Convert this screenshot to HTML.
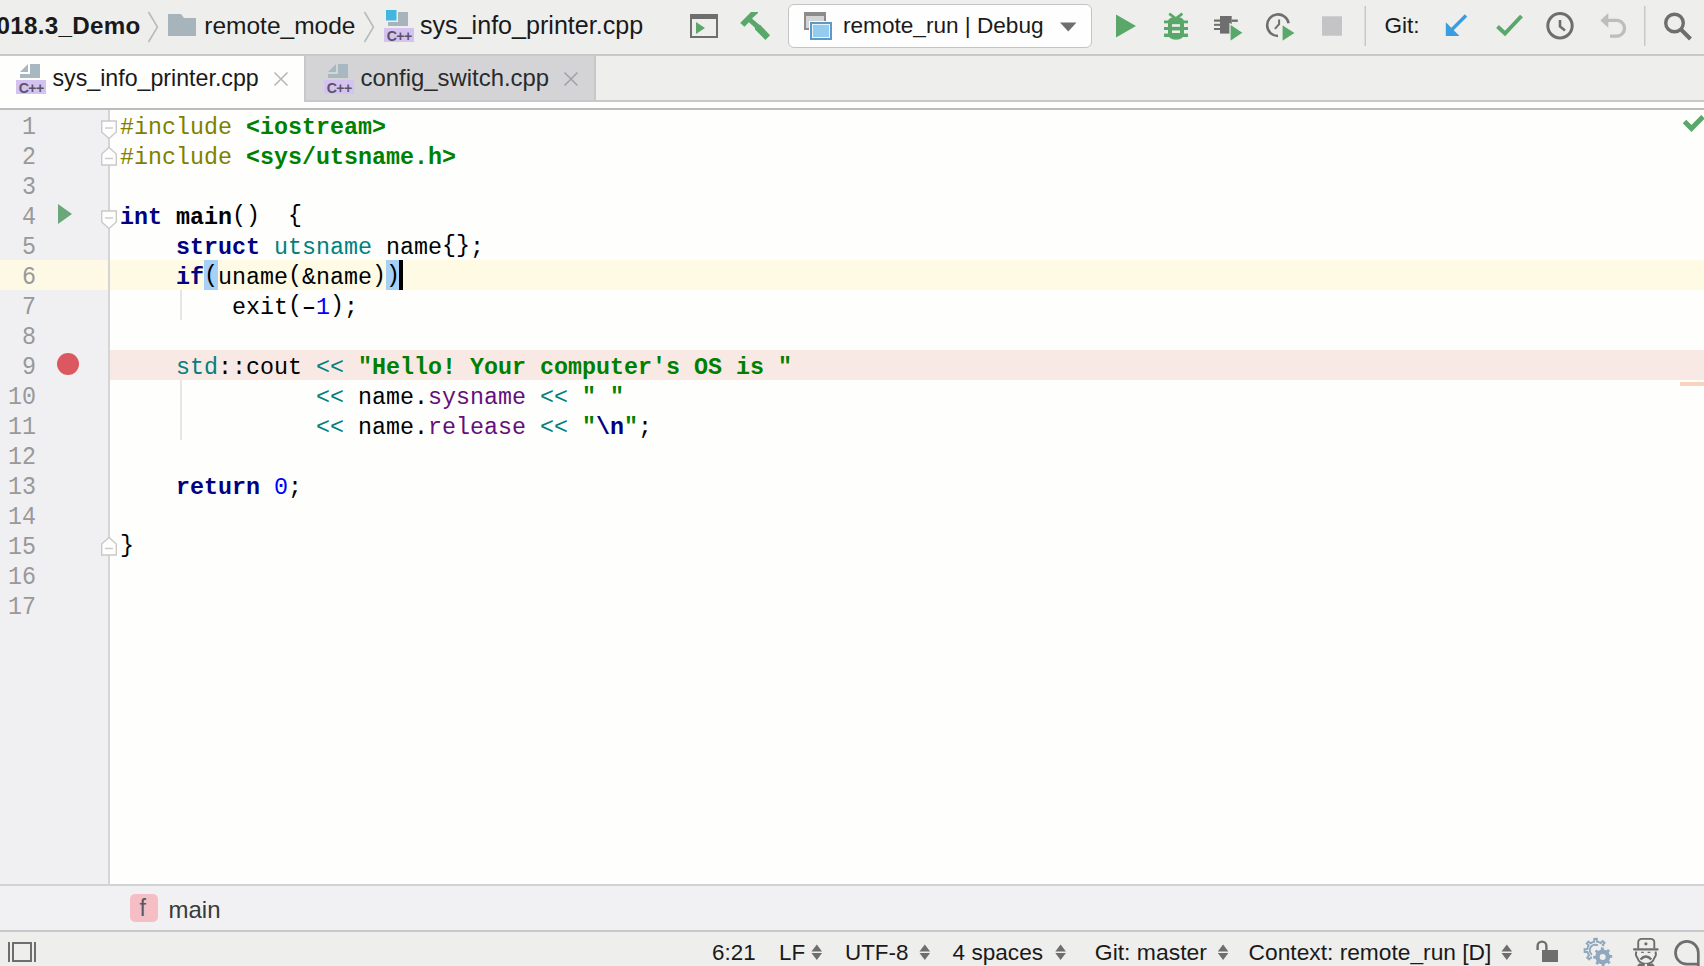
<!DOCTYPE html>
<html><head><meta charset="utf-8"><style>
*{margin:0;padding:0;box-sizing:border-box}
html,body{width:1704px;height:966px;overflow:hidden;background:#eeeeec;font-family:"Liberation Sans",sans-serif;position:relative}
.a{position:absolute}
.t{position:absolute;white-space:pre;line-height:1}
svg{position:absolute;overflow:visible}
.code{position:absolute;left:120px;margin-top:3px;transform:scaleY(1.06);transform-origin:0 21.2px;font-family:"Liberation Mono",monospace;font-size:23.33px;line-height:30px;white-space:pre;color:#000}
.ln{position:absolute;left:0;margin-top:3px;transform:scaleY(1.12);transform-origin:50% 21.2px;width:36px;text-align:right;font-family:"Liberation Mono",monospace;font-size:23.33px;line-height:30px;color:#999}
.kw{color:#000080;font-weight:bold}
.pp{color:#808000}
.inc{color:#008000;font-weight:bold}
.cls{color:#008080}
.op{color:#008080}
.fld{color:#660e7a}
.num{color:#0000ff}
.str{color:#008000;font-weight:bold}
.esc{color:#000080;font-weight:bold}
.br{position:relative;top:-2px}
.hy{display:inline-block;transform:scaleX(1.6)}
</style></head><body>
<div class="a" style="left:0px;top:0px;width:1704px;height:54px;background:#eeeeec;"></div>
<div class="a" style="left:0px;top:54px;width:1704px;height:2px;background:#c8c8ca;"></div>
<div class="a" style="left:0px;top:56px;width:1704px;height:44px;background:#eeeeec;"></div>
<div class="a" style="left:0px;top:56px;width:304px;height:52px;background:#fefefc;"></div>
<div class="a" style="left:304px;top:56px;width:2px;height:44px;background:#c8c8ca;"></div>
<div class="a" style="left:306px;top:56px;width:288px;height:44px;background:#d4d4d7;"></div>
<div class="a" style="left:594px;top:56px;width:2px;height:44px;background:#c8c8ca;"></div>
<div class="a" style="left:304px;top:100px;width:1400px;height:2px;background:#c8c8ca;"></div>
<div class="a" style="left:304px;top:102px;width:1400px;height:6px;background:#fefefc;"></div>
<div class="a" style="left:0px;top:108px;width:1704px;height:2px;background:#bcbcbe;"></div>
<div class="a" style="left:0px;top:110px;width:108px;height:774px;background:#f0f0f3;"></div>
<div class="a" style="left:108px;top:110px;width:2px;height:774px;background:#d5d5d8;"></div>
<div class="a" style="left:110px;top:110px;width:1594px;height:774px;background:#fefefc;"></div>
<div class="a" style="left:0px;top:884px;width:1704px;height:2px;background:#d2d2d5;"></div>
<div class="a" style="left:0px;top:886px;width:1704px;height:44px;background:#f1f1f3;"></div>
<div class="a" style="left:0px;top:930px;width:1704px;height:2px;background:#c8c8ca;"></div>
<div class="a" style="left:0px;top:932px;width:1704px;height:34px;background:#eeeeec;"></div>
<div class="a" style="left:0px;top:260px;width:108px;height:30px;background:#fef9e4;"></div>
<div class="a" style="left:110px;top:260px;width:1594px;height:30px;background:#fefae4;"></div>
<div class="a" style="left:110px;top:350px;width:1594px;height:30px;background:#f9e9e5;"></div>
<div class="a" style="left:204px;top:260px;width:14px;height:30px;background:#a6d0f5;"></div>
<div class="a" style="left:386px;top:260px;width:13px;height:30px;background:#a6d0f5;"></div>
<div class="a" style="left:180px;top:290px;width:2px;height:30px;background:#e6e6e6;"></div>
<div class="a" style="left:180px;top:380px;width:2px;height:60px;background:#e6e6e6;"></div>
<div class="a" style="left:57px;top:353px;width:22px;height:22px;background:#db5860;border-radius:50%"></div>
<div class="a" style="left:1680px;top:382px;width:24px;height:4px;background:#f9d3be;"></div>
<svg style="left:0;top:0" width="1704" height="966"><path d="M101.7,121 H116.3 V132 L109,138.5 L101.7,132 Z" fill="#fefefc" stroke="#c9c9cc" stroke-width="1.4"/><path d="M105,128 H113" stroke="#c9c9cc" stroke-width="1.4"/><path d="M101.7,165 H116.3 V154 L109,147.5 L101.7,154 Z" fill="#fefefc" stroke="#c9c9cc" stroke-width="1.4"/><path d="M105,158.5 H113" stroke="#c9c9cc" stroke-width="1.4"/><path d="M101.7,211 H116.3 V222 L109,228.5 L101.7,222 Z" fill="#fefefc" stroke="#c9c9cc" stroke-width="1.4"/><path d="M105,218 H113" stroke="#c9c9cc" stroke-width="1.4"/><path d="M101.7,555 H116.3 V544 L109,537.5 L101.7,544 Z" fill="#fefefc" stroke="#c9c9cc" stroke-width="1.4"/><path d="M105,548.5 H113" stroke="#c9c9cc" stroke-width="1.4"/><polygon points="58,204 72,214 58,224" fill="#6aa87b"/><polyline points="1684.5,121.4 1691.5,128.4 1703,116.8" fill="none" stroke="#59a869" stroke-width="5"/></svg>
<div class="ln" style="top:110px">1</div>
<div class="code" style="top:110px"><span class="pp">#include </span><span class="inc">&lt;iostream&gt;</span></div>
<div class="ln" style="top:140px">2</div>
<div class="code" style="top:140px"><span class="pp">#include </span><span class="inc">&lt;sys/utsname.h&gt;</span></div>
<div class="ln" style="top:170px">3</div>
<div class="ln" style="top:200px">4</div>
<div class="code" style="top:200px"><span class="kw">int</span> <b>main</b><span class="br">(</span><span class="br">)</span>  <span class="br">{</span></div>
<div class="ln" style="top:230px">5</div>
<div class="code" style="top:230px">    <span class="kw">struct</span> <span class="cls">utsname</span> name<span class="br">{</span><span class="br">}</span>;</div>
<div class="ln" style="top:260px">6</div>
<div class="code" style="top:260px">    <span class="kw">if</span><span class="br">(</span>uname<span class="br">(</span>&amp;name<span class="br">)</span><span class="br">)</span></div>
<div class="ln" style="top:290px">7</div>
<div class="code" style="top:290px">        exit<span class="br">(</span><span class="hy">-</span><span class="num">1</span><span class="br">)</span>;</div>
<div class="ln" style="top:320px">8</div>
<div class="ln" style="top:350px">9</div>
<div class="code" style="top:350px">    <span class="op">std</span>::cout <span class="op">&lt;&lt;</span> <span class="str">"Hello! Your computer's OS is "</span></div>
<div class="ln" style="top:380px">10</div>
<div class="code" style="top:380px">              <span class="op">&lt;&lt;</span> name.<span class="fld">sysname</span> <span class="op">&lt;&lt;</span> <span class="str">" "</span></div>
<div class="ln" style="top:410px">11</div>
<div class="code" style="top:410px">              <span class="op">&lt;&lt;</span> name.<span class="fld">release</span> <span class="op">&lt;&lt;</span> <span class="str">"<span class="esc">\n</span>"</span>;</div>
<div class="ln" style="top:440px">12</div>
<div class="ln" style="top:470px">13</div>
<div class="code" style="top:470px">    <span class="kw">return</span> <span class="num">0</span>;</div>
<div class="ln" style="top:500px">14</div>
<div class="ln" style="top:530px">15</div>
<div class="code" style="top:530px"><span class="br">}</span></div>
<div class="ln" style="top:560px">16</div>
<div class="ln" style="top:590px">17</div>
<div class="a" style="left:399px;top:260px;width:4px;height:30px;background:#000;"></div>
<div class="t" style="left:-3.50px;top:14.11px;font-size:24.20px;color:#1a1a1a;font-weight:bold;letter-spacing:0.28px">018.3_Demo</div>
<svg style="left:0;top:0" width="700" height="54"><polyline points="148.5,12 157.5,27 148.5,42" fill="none" stroke="#b5b9bd" stroke-width="1.5"/><polyline points="364.5,12 373.5,27 364.5,42" fill="none" stroke="#b5b9bd" stroke-width="1.5"/><path d="M168,14 H181 L184,18 H196 V36 H168 Z" fill="#a8b4bc"/><rect x="388" y="12" width="20" height="14" fill="#a8b4bc"/><rect x="385" y="9" width="13" height="13" fill="#eeeeec"/><rect x="386" y="10" width="10.5" height="10.5" fill="#40b6e0"/><rect x="384" y="28" width="30" height="14" fill="#d4c2f0"/></svg>
<div class="t" style="left:386.70px;top:28.58px;font-size:14.20px;color:#5c5466;font-weight:bold;letter-spacing:-0.6px">C++</div>
<div class="t" style="left:204.30px;top:13.76px;font-size:24.50px;color:#1a1a1a;font-weight:normal;">remote_mode</div>
<div class="t" style="left:420.00px;top:13.25px;font-size:25.10px;color:#1a1a1a;font-weight:normal;">sys_info_printer.cpp</div>
<svg style="left:0;top:0" width="1704" height="54"><rect x="691" y="15" width="26" height="22" fill="none" stroke="#6e6e6e" stroke-width="2"/><rect x="690" y="14" width="28" height="5" fill="#6e6e6e"/><polygon points="696,22 705,28 696,34" fill="#59a869"/><polygon points="751,12 758,12 758,13 752,18.4 759,24.6 760.3,25 770,35.2 765.4,39.9 755,29.6 754.8,27.4 748.8,22.2 744.5,26.8 740.2,23.1" fill="#59a869"/></svg>
<div class="a" style="left:788px;top:4px;width:304px;height:43.8px;background:#fefefe;border:1px solid #c4c4c4;border-radius:6px"></div>
<svg style="left:0;top:0" width="1704" height="54"><rect x="805" y="13" width="20" height="16" fill="#d4d4d4" stroke="#8c8c8c" stroke-width="2"/><rect x="804" y="12" width="22" height="4" fill="#8c8c8c"/><rect x="809" y="21" width="24" height="20" fill="#fefefe"/><rect x="811" y="23" width="20" height="16" fill="#94cbee" stroke="#5a9acb" stroke-width="2"/><rect x="812.5" y="24.5" width="17" height="13" fill="none" stroke="#e8f4fc" stroke-width="1"/><polygon points="1060,22.5 1076.5,22.5 1068.25,31.5" fill="#6e6e6e"/></svg>
<div class="t" style="left:843.00px;top:15.27px;font-size:22.60px;color:#1a1a1a;font-weight:normal;">remote_run | Debug</div>
<svg style="left:0;top:0" width="1704" height="54"><polygon points="1116,14.6 1136,26.1 1116,37.6" fill="#59a869"/><path d="M1169.2,13.6 L1175.8,18.6 L1182.4,13.6" fill="none" stroke="#59a869" stroke-width="2.6"/><path d="M1168,22 Q1168,17 1176,17 Q1184,17 1184,22 V33 Q1184,39.7 1176,39.7 Q1168,39.7 1168,33 Z" fill="#59a869"/><rect x="1164" y="20.5" width="24" height="2.8" fill="#59a869"/><rect x="1164" y="27" width="24" height="3" fill="#59a869"/><rect x="1164" y="33.6" width="24" height="3.4" fill="#59a869"/><rect x="1172" y="24.2" width="8" height="2.6" fill="#eeeeec"/><rect x="1172" y="30.4" width="8" height="2.6" fill="#eeeeec"/><rect x="1220" y="16" width="11.7" height="17.6" fill="#6e6e6e"/><rect x="1214" y="19.5" width="6" height="2.2" fill="#6e6e6e"/><rect x="1214" y="23.8" width="6" height="2" fill="#6e6e6e"/><rect x="1214" y="28" width="6" height="2" fill="#6e6e6e"/><rect x="1231.7" y="19.5" width="6.1" height="2.4" fill="#6e6e6e"/><polygon points="1230,23.8 1243.4,32.8 1230,41.8" fill="#59a869" stroke="#eeeeec" stroke-width="1.2"/><path d="M1288.6,23.3 A10.8,10.8 0 1 0 1278,36" fill="none" stroke="#6e6e6e" stroke-width="2.6"/><path d="M1279.1,19.6 V24.2 L1274.9,28.9" fill="none" stroke="#6e6e6e" stroke-width="2"/><polygon points="1282,24.2 1295.5,33 1282,41.8" fill="#59a869" stroke="#eeeeec" stroke-width="1.2"/><rect x="1322" y="16.3" width="20" height="19.4" fill="#c4c4c6"/><rect x="1364.5" y="6" width="1.5" height="40" fill="#c8c8c8"/><rect x="1644" y="6" width="1.5" height="40" fill="#c8c8c8"/><path d="M1466,15.5 L1452,29.5" stroke="#3a9de0" stroke-width="3.4"/><polygon points="1445.8,22.2 1445.8,36 1459.5,36" fill="#3a9de0"/><polyline points="1497.5,26.5 1505,33.5 1521.5,16" fill="none" stroke="#59a869" stroke-width="4"/><circle cx="1560" cy="25.7" r="12.2" fill="none" stroke="#6e6e6e" stroke-width="3"/><path d="M1560,20 V26.5 L1565,30.5" fill="none" stroke="#6e6e6e" stroke-width="2.6"/><path d="M1606,20.4 H1617.5 A7.9,7.9 0 0 1 1617.5,36.1 H1610" fill="none" stroke="#bdbdbd" stroke-width="3.3"/><polygon points="1600.3,20.4 1608.3,13.1 1608.3,27.7" fill="#bdbdbd"/><circle cx="1674.5" cy="23" r="8.8" fill="none" stroke="#6e6e6e" stroke-width="3.4"/><path d="M1681,29.5 L1690.5,39" stroke="#6e6e6e" stroke-width="4"/></svg>
<div class="t" style="left:1384.50px;top:15.47px;font-size:22.60px;color:#1a1a1a;font-weight:normal;">Git:</div>
<svg style="left:0;top:0" width="700" height="110"><polygon points="20,72 28,64 28,72" fill="#a8b8c0"/><rect x="30" y="64" width="10" height="14" fill="#a8b8c0"/><rect x="20" y="74" width="20" height="4" fill="#a8b8c0"/><rect x="16" y="80" width="30" height="14" fill="#d4c2f0"/></svg><div class="t" style="left:18.70px;top:80.58px;font-size:14.20px;color:#5c5466;font-weight:bold;letter-spacing:-0.6px">C++</div>
<svg style="left:0;top:0" width="700" height="110"><polygon points="328,72 336,64 336,72" fill="#a8b8c0"/><rect x="338" y="64" width="10" height="14" fill="#a8b8c0"/><rect x="328" y="74" width="20" height="4" fill="#a8b8c0"/><rect x="324" y="80" width="30" height="14" fill="#d4c2f0"/></svg><div class="t" style="left:326.70px;top:80.58px;font-size:14.20px;color:#5c5466;font-weight:bold;letter-spacing:-0.6px">C++</div>
<div class="t" style="left:52.50px;top:66.66px;font-size:23.20px;color:#1a1a1a;font-weight:normal;">sys_info_printer.cpp</div>
<div class="t" style="left:360.50px;top:66.37px;font-size:23.90px;color:#2b2b2b;font-weight:normal;">config_switch.cpp</div>
<svg style="left:0;top:0" width="700" height="110"><path d="M274.5,72.5 L287.5,85.5 M287.5,72.5 L274.5,85.5" stroke="#b4b8bc" stroke-width="1.6"/><path d="M564.5,72.5 L577.5,85.5 M577.5,72.5 L564.5,85.5" stroke="#9ea4a8" stroke-width="1.6"/></svg>
<div class="a" style="left:130px;top:894px;width:28px;height:28px;background:#f5bec5;border-radius:5px"></div>
<div class="t" style="left:139.50px;top:897.11px;font-size:23.50px;color:#5b5668;font-weight:normal;">f</div>
<div class="t" style="left:168.50px;top:897.88px;font-size:24.00px;color:#3a3a3a;font-weight:normal;">main</div>
<div class="t" style="left:712.00px;top:941.94px;font-size:22.40px;color:#1a1a1a;font-weight:normal;">6:21</div>
<div class="t" style="left:779.00px;top:941.94px;font-size:22.40px;color:#1a1a1a;font-weight:normal;">LF</div>
<div class="t" style="left:845.00px;top:941.94px;font-size:22.40px;color:#1a1a1a;font-weight:normal;">UTF-8</div>
<div class="t" style="left:952.60px;top:941.77px;font-size:22.60px;color:#1a1a1a;font-weight:normal;">4 spaces</div>
<div class="t" style="left:1094.80px;top:941.47px;font-size:22.95px;color:#1a1a1a;font-weight:normal;">Git: master</div>
<div class="t" style="left:1248.60px;top:941.14px;font-size:22.75px;color:#1a1a1a;font-weight:normal;">Context: remote_run [D]</div>
<svg style="left:0;top:0" width="1704" height="966"><polygon points="811.5,951.5 816.8,944.5 822.1,951.5" fill="#6e6e6e"/><polygon points="811.5,953 816.8,960 822.1,953" fill="#6e6e6e"/><polygon points="919.5,951.5 924.8,944.5 930.1,951.5" fill="#6e6e6e"/><polygon points="919.5,953 924.8,960 930.1,953" fill="#6e6e6e"/><polygon points="1055.3,951.5 1060.6,944.5 1065.8999999999999,951.5" fill="#6e6e6e"/><polygon points="1055.3,953 1060.6,960 1065.8999999999999,953" fill="#6e6e6e"/><polygon points="1217.8,951.5 1223.1,944.5 1228.3999999999999,951.5" fill="#6e6e6e"/><polygon points="1217.8,953 1223.1,960 1228.3999999999999,953" fill="#6e6e6e"/><polygon points="1501.5,951.5 1506.8,944.5 1512.1,951.5" fill="#6e6e6e"/><polygon points="1501.5,953 1506.8,960 1512.1,953" fill="#6e6e6e"/><rect x="8" y="942" width="2" height="20" fill="#6e6e6e"/><rect x="13" y="943" width="18" height="18" fill="none" stroke="#6e6e6e" stroke-width="2"/><rect x="34" y="942" width="2" height="20" fill="#6e6e6e"/><path d="M1537.6,950 V946 A4.4,4.4 0 0 1 1546.4,946 V950" fill="none" stroke="#6e6e6e" stroke-width="2.4"/><rect x="1542" y="950" width="16" height="12" fill="#6e6e6e"/><path d="M1594.19,941.77 L1594.16,938.93 L1596.84,938.84 L1597.01,941.67 L1598.29,941.94 L1599.51,942.40 L1600.65,943.03 L1602.64,941.01 L1604.60,942.83 L1602.72,944.96 L1603.43,946.05 L1603.97,947.24 L1604.33,948.49 L1607.17,948.46 L1607.26,951.14 L1604.43,951.31 L1604.16,952.59 L1603.70,953.81 L1603.07,954.95 L1605.09,956.94 L1603.27,958.90 L1601.14,957.02 L1600.05,957.73 L1598.86,958.27 L1597.61,958.63 L1597.64,961.47 L1594.96,961.56 L1594.79,958.73 L1593.51,958.46 L1592.29,958.00 L1591.15,957.37 L1589.16,959.39 L1587.20,957.57 L1589.08,955.44 L1588.37,954.35 L1587.83,953.16 L1587.47,951.91 L1584.63,951.94 L1584.54,949.26 L1587.37,949.09 L1587.64,947.81 L1588.10,946.59 L1588.73,945.45 L1586.71,943.46 L1588.53,941.50 L1590.66,943.38 L1591.75,942.67 L1592.94,942.13 Z" fill="none" stroke="#8fa8bf" stroke-width="1.9"/><path d="M1592.5,955 A5,5 0 0 1 1598,945.5" fill="none" stroke="#8fa8bf" stroke-width="1.9"/><circle cx="1602.7" cy="956.9" r="10.8" fill="#eeeeec"/><path d="M1600.87,949.73 L1600.77,947.50 L1603.62,947.34 L1603.75,949.58 L1604.70,949.78 L1605.61,950.10 L1606.48,950.54 L1607.98,948.88 L1610.11,950.79 L1608.62,952.46 L1609.15,953.28 L1609.57,954.15 L1609.87,955.07 L1612.10,954.97 L1612.26,957.82 L1610.02,957.95 L1609.82,958.90 L1609.50,959.81 L1609.06,960.68 L1610.72,962.18 L1608.81,964.31 L1607.14,962.82 L1606.32,963.35 L1605.45,963.77 L1604.53,964.07 L1604.63,966.30 L1601.78,966.46 L1601.65,964.22 L1600.70,964.02 L1599.79,963.70 L1598.92,963.26 L1597.42,964.92 L1595.29,963.01 L1596.78,961.34 L1596.25,960.52 L1595.83,959.65 L1595.53,958.73 L1593.30,958.83 L1593.14,955.98 L1595.38,955.85 L1595.58,954.90 L1595.90,953.99 L1596.34,953.12 L1594.68,951.62 L1596.59,949.49 L1598.26,950.98 L1599.08,950.45 L1599.95,950.03 Z" fill="#8fa8bf"/><circle cx="1602.7" cy="956.9" r="3" fill="#eeeeec"/><path d="M1638.2,948.5 V942.5 Q1638.2,938.9 1642,938.9 H1650.5 Q1654.3,938.9 1654.3,942.5 V948.5" fill="none" stroke="#6e6e6e" stroke-width="1.9"/><rect x="1633" y="948.2" width="25.6" height="2.2" rx="1" fill="#6e6e6e"/><circle cx="1645.9" cy="943.8" r="1.6" fill="#6e6e6e"/><path d="M1636.3,951.5 Q1635,955 1637.5,958 Q1639,963.5 1645.9,964 Q1652.8,963.5 1654.3,958 Q1656.8,955 1655.5,951.5" fill="none" stroke="#6e6e6e" stroke-width="1.9"/><path d="M1641.2,952.4 H1643.8 M1647.6,952.4 H1650.4" stroke="#6e6e6e" stroke-width="1.4"/><path d="M1640.5,959.5 Q1645.9,953.5 1651.3,959.5" fill="none" stroke="#6e6e6e" stroke-width="2.4"/><path d="M1637,966 L1639,963.5 H1652.8 L1654.8,966 Z" fill="#6e6e6e"/><circle cx="1645.9" cy="965" r="1.3" fill="#eeeeec"/><path d="M1698.3,966 V952.8 A11.4,11.4 0 1 0 1686.9,964.2 H1698.3" fill="none" stroke="#6e6e6e" stroke-width="2.7"/></svg>
</body></html>
